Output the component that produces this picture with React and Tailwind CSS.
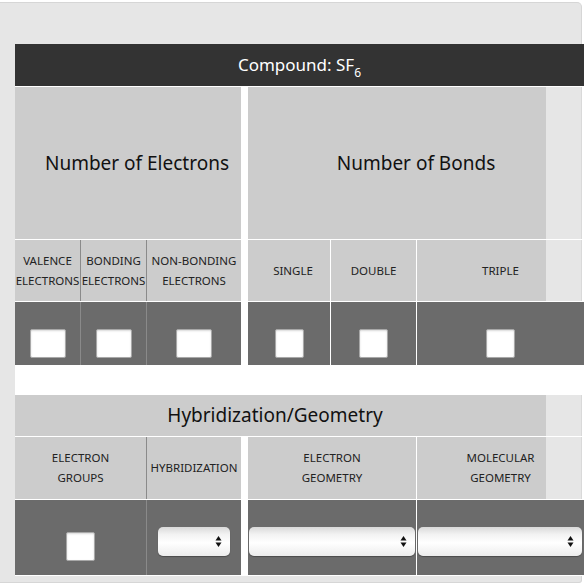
import React from "react";

function Box({ w = "w-[29px]" }) {
  return (
    <div
      className={`${w} h-[29px] bg-white border border-[#a8a8a8] rounded-[2px] shadow-[inset_0_1px_2px_rgba(0,0,0,0.15)]`}
    />
  );
}

function Select({ w }) {
  return (
    <div
      className={`${w} h-[29px] rounded-[5px] bg-[linear-gradient(to_bottom,#d9d9d9_0%,#f2f2f2_25%,#ffffff_55%,#ececec_100%)] shadow-[0_1px_1px_rgba(0,0,0,0.3)] flex items-center justify-end pr-[8px]`}
    >
      <svg width="7" height="13" viewBox="0 0 7 13">
        <path d="M3.5 1 L6.5 5.5 L0.5 5.5 Z" fill="#111" />
        <path d="M3.5 12 L6.5 7.5 L0.5 7.5 Z" fill="#111" />
      </svg>
    </div>
  );
}

function Sub({ w, children, border = "", extra = "" }) {
  return (
    <div
      className={`${w} ${border} ${extra} h-full flex items-center justify-center text-center text-[11.5px] leading-[20px] text-[#222] uppercase whitespace-nowrap`}
    >
      <div>{children}</div>
    </div>
  );
}

export default function App() {
  return (
    <div className="w-[587px] h-[587px] bg-white overflow-hidden font-['Noto_Sans',sans-serif]">
      <div className="mt-[2px] w-[582px] h-[581px] bg-[#e6e6e6] rounded-tr-[5px] rounded-br-[3px] border-r border-t border-b border-[#d6d6d6] pt-[41px] pl-[15px]">
        <div className="w-[569px] flex flex-col">
          {/* header */}
          <div className="h-[42px] bg-[#333333] text-white text-[17px] flex items-center justify-center">
            <span>
              Compound: SF<sub className="text-[12px] align-[-3px]">6</sub>
            </span>
          </div>
          <div className="h-px bg-white" />
          {/* row 1 */}
          <div className="h-[152px] flex">
            <div className="w-[226px] bg-[#cccccc] flex items-center justify-center pl-[18px] text-[19px] text-[#111]">
              Number of Electrons
            </div>
            <div className="w-[7px] bg-white" />
            <div className="w-[336px] bg-[linear-gradient(to_right,#cccccc_298px,#e6e6e6_298px,#e6e6e6_333px,#d9d9d9_333px,#d9d9d9_334px,#ffffff_334px)] flex items-center justify-center text-[19px] text-[#111]">
              Number of Bonds
            </div>
          </div>
          <div className="h-px bg-white" />
          {/* row 2 */}
          <div className="h-[61px] flex">
            <div className="w-[226px] bg-[#cccccc] flex">
              <Sub w="w-[66px]" border="border-r border-[#8a8a8a]">
                Valence
                <br />
                Electrons
              </Sub>
              <Sub w="w-[66px]" border="border-r border-[#8a8a8a]">
                Bonding
                <br />
                Electrons
              </Sub>
              <Sub w="w-[94px]">
                Non-Bonding
                <br />
                Electrons
              </Sub>
            </div>
            <div className="w-[7px] bg-white" />
            <div className="w-[336px] flex">
              <Sub w="w-[83px]" border="border-r border-white" extra="bg-[#cccccc] pl-[8px]">
                Single
              </Sub>
              <Sub w="w-[86px]" border="border-r border-white" extra="bg-[#cccccc]">
                Double
              </Sub>
              <Sub
                w="w-[167px]"
                extra="bg-[linear-gradient(to_right,#cccccc_129px,#e6e6e6_129px,#e6e6e6_164px,#d9d9d9_164px,#d9d9d9_165px,#ffffff_165px)]"
              >
                Triple
              </Sub>
            </div>
          </div>
          <div className="h-px bg-white" />
          {/* row 3 */}
          <div className="h-[63px] flex">
            <div className="w-[226px] bg-[#6b6b6b] flex">
              <div className="w-[66px] border-r border-[#8a8a8a] flex items-end justify-center pb-[7px]">
                <Box w="w-[36px]" />
              </div>
              <div className="w-[66px] border-r border-[#8a8a8a] flex items-end justify-center pb-[7px]">
                <Box w="w-[36px]" />
              </div>
              <div className="w-[94px] flex items-end justify-center pb-[7px]">
                <Box w="w-[36px]" />
              </div>
            </div>
            <div className="w-[7px] bg-white" />
            <div className="w-[336px] bg-[#6b6b6b] flex">
              <div className="w-[83px] border-r border-white flex items-end justify-center pb-[7px]">
                <Box />
              </div>
              <div className="w-[86px] border-r border-white flex items-end justify-center pb-[7px]">
                <Box />
              </div>
              <div className="w-[167px] flex items-end justify-center pb-[7px]">
                <Box />
              </div>
            </div>
          </div>
          {/* spacer */}
          <div className="h-[30px] bg-white" />
          {/* row 4 */}
          <div className="h-[41px] bg-[linear-gradient(to_right,#cccccc_531px,#e6e6e6_531px,#e6e6e6_566px,#d9d9d9_566px,#d9d9d9_567px,#ffffff_567px)] flex items-center justify-center pr-[49px] text-[19px] text-[#111]">
            Hybridization/Geometry
          </div>
          <div className="h-px bg-white" />
          {/* row 5 */}
          <div className="h-[62px] flex">
            <div className="w-[226px] bg-[#cccccc] flex">
              <Sub w="w-[132px]" border="border-r border-[#8a8a8a]">
                Electron
                <br />
                Groups
              </Sub>
              <Sub w="w-[94px]">Hybridization</Sub>
            </div>
            <div className="w-[7px] bg-white" />
            <div className="w-[336px] flex">
              <Sub w="w-[169px]" border="border-r border-white" extra="bg-[#cccccc]">
                Electron
                <br />
                Geometry
              </Sub>
              <Sub
                w="w-[167px]"
                extra="bg-[linear-gradient(to_right,#cccccc_129px,#e6e6e6_129px,#e6e6e6_164px,#d9d9d9_164px,#d9d9d9_165px,#ffffff_165px)]"
              >
                Molecular
                <br />
                Geometry
              </Sub>
            </div>
          </div>
          <div className="h-px bg-white" />
          {/* row 6 */}
          <div className="h-[75px] flex">
            <div className="w-[226px] bg-[#6b6b6b] flex">
              <div className="w-[132px] border-r border-[#8a8a8a] flex items-end justify-center pb-[14px]">
                <Box />
              </div>
              <div className="w-[94px] flex items-start justify-center pt-[27px]">
                <Select w="w-[72px]" />
              </div>
            </div>
            <div className="w-[7px] bg-white" />
            <div className="w-[336px] bg-[#6b6b6b] flex">
              <div className="w-[169px] border-r border-white flex items-start pl-[1px] pt-[27px]">
                <Select w="w-[166px]" />
              </div>
              <div className="w-[167px] flex items-start pl-[1px] pt-[27px]">
                <Select w="w-[164px]" />
              </div>
            </div>
          </div>
          <div className="h-px bg-white" />
        </div>
      </div>
    </div>
  );
}
